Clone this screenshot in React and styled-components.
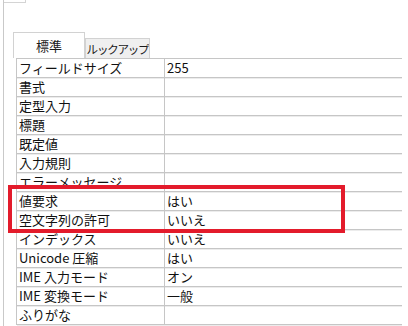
import React from "react";
import styled, { createGlobalStyle } from "styled-components";

const Global = createGlobalStyle`
  html, body {
    margin: 0;
    padding: 0;
    background: #ffffff;
  }
  body {
    font-family: "Noto Sans CJK JP", "Noto Sans", sans-serif;
  }
`;

const Page = styled.div`
  position: relative;
  width: 408px;
  height: 326px;
  overflow: hidden;
  background: #ffffff;
`;

const Frame = styled.div`
  margin-left: 3px;
  height: 100%;
  border-left: 1px solid #c9c9c9;
  display: flex;
  flex-direction: column;
`;

const Corner = styled.div`
  width: 21px;
  height: 2px;
  border-right: 1px solid #d4d4d4;
  border-bottom: 1px solid #d4d4d4;
`;

const Panel = styled.div`
  margin-top: 29px;
  margin-left: 9px;
  display: flex;
  flex-direction: column;
`;

const TabBar = styled.div`
  display: flex;
  align-items: flex-end;
  height: 26px;
`;

const Tab = styled.div`
  box-sizing: border-box;
  display: flex;
  align-items: center;
  justify-content: center;
  white-space: nowrap;
  overflow: hidden;
  color: #1a1a1a;
  border: 1px solid #d2d2d2;
  border-bottom: none;
  width: ${(p) => (p.active ? "72px" : "65px")};
  height: ${(p) => (p.active ? "26px" : "20px")};
  background: ${(p) => (p.active ? "#ffffff" : "#efefef")};
  font-size: ${(p) => (p.active ? "13px" : "11.5px")};
  letter-spacing: ${(p) => (p.active ? "0" : "-1.2px")};
`;

const Grid = styled.div`
  margin-left: 3px;
  width: 385px;
  border-top: 1px solid #c6c6c6;
  border-left: 1px solid #c6c6c6;
`;

const Row = styled.div`
  box-sizing: border-box;
  display: flex;
  height: 19px;
  border-bottom: 1px solid #c6c6c6;
  box-shadow: 0 1px 0 #ececec;
`;

const Cell = styled.div`
  box-sizing: border-box;
  height: 18px;
  line-height: 18px;
  font-size: 13px;
  color: #111111;
  white-space: nowrap;
  overflow: hidden;
  padding-left: 2px;
  ${(p) =>
    p.label
      ? "width: 148px; border-right: 1px solid #c6c6c6;"
      : "flex: 1;"}
`;

const Highlight = styled.div`
  position: absolute;
  left: 8px;
  top: 185px;
  width: 337px;
  height: 48px;
  box-sizing: border-box;
  border: 4px solid #e31b2b;
  pointer-events: none;
`;

const rows = [
  ["フィールドサイズ", "255"],
  ["書式", ""],
  ["定型入力", ""],
  ["標題", ""],
  ["既定値", ""],
  ["入力規則", ""],
  ["エラーメッセージ", ""],
  ["値要求", "はい"],
  ["空文字列の許可", "いいえ"],
  ["インデックス", "いいえ"],
  ["Unicode 圧縮", "はい"],
  ["IME 入力モード", "オン"],
  ["IME 変換モード", "一般"],
  ["ふりがな", ""],
];

export default function App() {
  return (
    <Page>
      <Global />
      <Frame>
        <Corner />
        <Panel>
          <TabBar>
            <Tab active>標準</Tab>
            <Tab>ルックアップ</Tab>
          </TabBar>
          <Grid>
            {rows.map(([name, value]) => (
              <Row key={name}>
                <Cell label>{name}</Cell>
                <Cell>{value}</Cell>
              </Row>
            ))}
          </Grid>
        </Panel>
      </Frame>
      <Highlight />
    </Page>
  );
}
